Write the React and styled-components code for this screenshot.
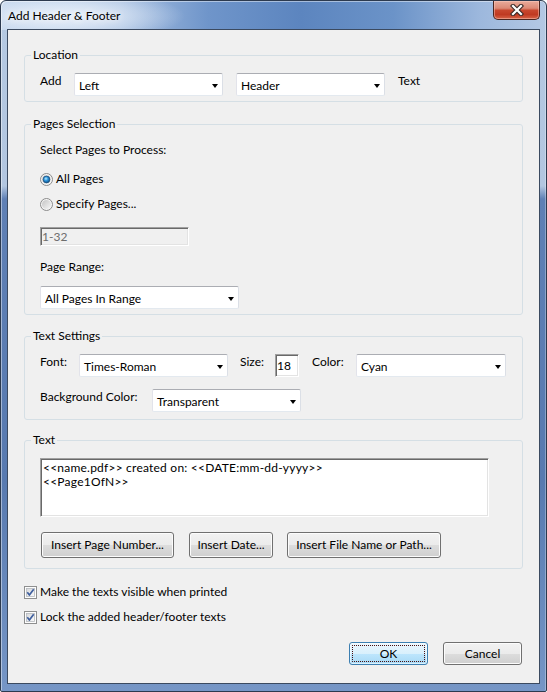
import React from 'react';
import styled, { createGlobalStyle, css } from 'styled-components';

const UI_FONT = `Lato, "Noto Sans", "DejaVu Sans", sans-serif`;

const GlobalStyle = createGlobalStyle`
  html, body { margin: 0; padding: 0; background: #fff; }
  body { font-family: ${UI_FONT}; font-size: 12px; color: #000; }
  *, *::before, *::after { box-sizing: border-box; }
`;

const Window = styled.div`
  width: 547px;
  height: 692px;
  display: flex;
  flex-direction: column;
  border: 1px solid #2c3a4f;
  border-radius: 6px 6px 2px 2px;
  padding: 0 6px 7px;
  overflow: hidden;
  background:
    radial-gradient(ellipse 120px 26px at 64px 15px, rgba(236, 243, 251, 0.95) 0%, rgba(236, 243, 251, 0.6) 45%, rgba(236, 243, 251, 0) 100%) top / 100% 29px no-repeat,
    linear-gradient(90deg, #bcd0ea 0%, #a6bfe1 22%, #6f95ca 38%, #5c85bf 55%, #6b93c8 72%, #9db8dd 88%, #b4c8e4 100%) top / 100% 29px no-repeat,
    linear-gradient(180deg, #b5c9e2 0px, #b2c6e0 185px, #5f80b5 198px, #587ab0 480px, #7696c6 100%);
  box-shadow: inset 1px 1px 0 rgba(255, 255, 255, 0.45), inset -1px 0 0 rgba(255, 255, 255, 0.3);
`;

const TitleBar = styled.div`
  height: 28px;
  flex: none;
  display: flex;
  justify-content: space-between;
  align-items: flex-start;
`;

const Title = styled.div`
  padding: 7px 0 0 1px;
  line-height: 16px;
  font-size: 12px;
  color: #000;
  text-shadow: 0 0 6px rgba(255, 255, 255, 0.9), 0 0 10px rgba(255, 255, 255, 0.7);
`;

const CloseButton = styled.div`
  width: 47px;
  height: 19px;
  display: flex;
  align-items: center;
  justify-content: center;
  border: 1px solid #4b2620;
  border-top: none;
  border-radius: 0 0 5px 5px;
  background: linear-gradient(180deg, #e9ab9b 0%, #dc8a76 40%, #c8472e 52%, #c03a22 75%, #d76448 100%);
  box-shadow: inset 0 0 0 1px rgba(255, 210, 200, 0.45);
`;

const Client = styled.div`
  flex: 1;
  display: flex;
  flex-direction: column;
  background: #f0f0f0;
  border: 1px solid #3b4a60;
  padding: 0 16px;
`;

const Group = styled.fieldset`
  margin: ${(p) => p.$mt}px 0 0;
  padding: 0;
  border: 1px solid #d5dfe5;
  border-radius: 3px;
  min-width: 0;
`;

const Legend = styled.legend`
  margin-left: 6px;
  padding: 0 2px;
  line-height: 16px;
  font-size: 12px;
`;

const GroupBody = styled.div`
  display: flex;
  flex-direction: column;
  align-items: flex-start;
  padding: ${(p) => p.$pt}px 15px ${(p) => p.$pb}px;
`;

const Row = styled.div`
  display: flex;
  align-items: ${(p) => p.$align || 'flex-start'};
  gap: ${(p) => p.$gap || 0}px;
  margin-top: ${(p) => p.$mt || 0}px;
  margin-left: ${(p) => p.$ml || 0}px;
`;

const Label = styled.div`
  line-height: 16px;
  white-space: nowrap;
  width: ${(p) => (p.$w ? `${p.$w}px` : 'auto')};
  margin-left: ${(p) => p.$ml || 0}px;
  margin-top: ${(p) => p.$mt || 0}px;
  flex: none;
`;

const Combo = styled.div`
  width: ${(p) => p.$w}px;
  height: 23px;
  flex: none;
  display: flex;
  align-items: center;
  justify-content: space-between;
  padding: 2px 4px 0 4px;
  margin-left: ${(p) => p.$ml || 0}px;
  margin-top: ${(p) => p.$mt || 0}px;
  background: #fff;
  border: 1px solid;
  border-color: #abadb3 #dbdfe6 #e3e9ef #e2e3ea;
  border-radius: 2px;
  line-height: 16px;
`;

const Arrow = styled.span`
  width: 0;
  height: 0;
  border-left: 3.5px solid transparent;
  border-right: 3.5px solid transparent;
  border-top: 4px solid #000;
  margin-top: 1px;
`;

const sunken = css`
  border: 1px solid;
  border-color: #a0a0a0 #ffffff #ffffff #a0a0a0;
  box-shadow: inset 1px 1px 0 #696969, inset -1px -1px 0 #e3e3e3;
`;

const SunkenInput = styled.input`
  ${sunken};
  width: ${(p) => p.$w}px;
  height: ${(p) => p.$h}px;
  margin: ${(p) => p.$mt || 0}px 0 0 ${(p) => p.$ml || 0}px;
  padding: 0 0 0 ${(p) => p.$pl || 1}px;
  font-family: ${UI_FONT};
  font-size: 12px;
  color: ${(p) => (p.$disabled ? '#6d6d6d' : '#000')};
  background: ${(p) => (p.$disabled ? '#f0f0f0' : '#fff')};
  outline: none;
  flex: none;
`;

const TextBox = styled.textarea`
  ${sunken};
  width: 449px;
  height: 59px;
  padding: 2px 2px;
  font-family: ${UI_FONT};
  font-size: 12px;
  line-height: 14px;
  letter-spacing: 0.22px;
  color: #000;
  background: #fff;
  resize: none;
  overflow: hidden;
  outline: none;
  display: block;
`;

const Button = styled.div`
  position: relative;
  width: ${(p) => p.$w}px;
  height: ${(p) => p.$h}px;
  margin-left: ${(p) => p.$ml || 0}px;
  display: flex;
  align-items: center;
  justify-content: center;
  line-height: 16px;
  white-space: nowrap;
  border: 1px solid ${(p) => (p.$primary ? '#3c7fb1' : '#707070')};
  border-radius: 3px;
  background: ${(p) =>
    p.$primary
      ? 'linear-gradient(180deg, #eaf6fd 0%, #d9f0fc 50%, #bee6fd 50%, #a7d9f5 100%)'
      : 'linear-gradient(180deg, #f2f2f2 0%, #ebebeb 50%, #dddddd 50%, #cfcfcf 100%)'};
  box-shadow: inset 0 0 0 1px ${(p) => (p.$primary ? 'rgba(255,255,255,0.6)' : '#fcfcfc')};
  flex: none;
  ${(p) =>
    p.$primary &&
    css`
      &::after {
        content: '';
        position: absolute;
        inset: 2px;
        border: 1px dotted #4a1010;
        border-radius: 1px;
      }
    `}
`;

const CheckRow = styled.div`
  display: flex;
  align-items: center;
  gap: 3px;
  line-height: 16px;
  margin-top: ${(p) => p.$mt}px;
`;

const Footer = styled.div`
  display: flex;
  justify-content: flex-end;
  gap: 15px;
  margin-top: 17px;
  padding-right: 1px;
`;

function Radio({ checked, id }) {
  return (
    <svg width="13" height="13" viewBox="0 0 13 13" style={{ flex: 'none' }}>
      <defs>
        <linearGradient id={`rg${id}`} x1="0" y1="0" x2="1" y2="1">
          <stop offset="0" stopColor="#c4c4c4" />
          <stop offset="1" stopColor="#f7f7f7" />
        </linearGradient>
        <radialGradient id={`rd${id}`} cx="0.42" cy="0.38" r="0.65">
          <stop offset="0" stopColor="#b9ecff" />
          <stop offset="0.45" stopColor="#2c94dc" />
          <stop offset="1" stopColor="#0d4c80" />
        </radialGradient>
      </defs>
      <circle cx="6.5" cy="6.5" r="6" fill="#f5f5f5" stroke="#8b8b8b" strokeWidth="1" />
      <circle cx="6.5" cy="6.5" r="4.6" fill={`url(#rg${id})`} />
      {checked && <circle cx="6.5" cy="6.5" r="3.4" fill={`url(#rd${id})`} stroke="#1a4b78" strokeWidth="0.7" />}
    </svg>
  );
}

function Checkbox({ id }) {
  return (
    <svg width="13" height="13" viewBox="0 0 13 13" style={{ flex: 'none' }}>
      <defs>
        <linearGradient id={`cg${id}`} x1="0" y1="0" x2="1" y2="1">
          <stop offset="0" stopColor="#d6d8db" />
          <stop offset="1" stopColor="#fbfbfb" />
        </linearGradient>
      </defs>
      <rect x="0.5" y="0.5" width="12" height="12" fill="#fdfdfd" stroke="#8e8f8f" />
      <rect x="2.5" y="2.5" width="8" height="8" fill={`url(#cg${id})`} stroke="#b5b9be" strokeWidth="0.8" />
      <path d="M3.3 6.3 L5.4 9 L9.7 3.2" fill="none" stroke="#3f5f9e" strokeWidth="1.7" strokeLinejoin="round" />
    </svg>
  );
}

function CloseX() {
  return (
    <svg width="14" height="12" viewBox="0 0 14 12">
      <path d="M3 2 L11 10 M11 2 L3 10" stroke="#3a2a28" strokeWidth="4.4" strokeLinecap="square" />
      <path d="M3 2 L11 10 M11 2 L3 10" stroke="#ffffff" strokeWidth="2.2" strokeLinecap="square" />
    </svg>
  );
}

export default function App() {
  return (
    <>
      <GlobalStyle />
      <Window>
        <TitleBar>
          <Title>Add Header &amp; Footer</Title>
          <CloseButton>
            <CloseX />
          </CloseButton>
        </TitleBar>
        <Client>
          <Group $mt={17}>
            <Legend>Location</Legend>
            <GroupBody $pt={10} $pb={5}>
              <Row>
                <Label $w={34}>Add</Label>
                <Combo $w={149}>
                  <span>Left</span>
                  <Arrow />
                </Combo>
                <Combo $w={149} $ml={13}>
                  <span>Header</span>
                  <Arrow />
                </Combo>
                <Label $ml={13}>Text</Label>
              </Row>
            </GroupBody>
          </Group>

          <Group $mt={14}>
            <Legend>Pages Selection</Legend>
            <GroupBody $pt={10} $pb={5}>
              <Label>Select Pages to Process:</Label>
              <CheckRow $mt={13}>
                <Radio checked id="a" />
                <span>All Pages</span>
              </CheckRow>
              <CheckRow $mt={9}>
                <Radio id="b" />
                <span>Specify Pages...</span>
              </CheckRow>
              <SunkenInput $w={149} $h={19} $mt={15} $pl={0} $disabled readOnly value="1-32" />
              <Label $mt={13}>Page Range:</Label>
              <Combo $w={199} $mt={11}>
                <span>All Pages In Range</span>
                <Arrow />
              </Combo>
            </GroupBody>
          </Group>

          <Group $mt={13}>
            <Legend>Text Settings</Legend>
            <GroupBody $pt={10} $pb={7}>
              <Row>
                <Label $w={39}>Font:</Label>
                <Combo $w={149}>
                  <span>Times-Roman</span>
                  <Arrow />
                </Combo>
                <Label $w={35} $ml={12}>Size:</Label>
                <SunkenInput $w={24} $h={23} $pl={1} readOnly value="18" />
                <Label $w={44} $ml={13}>Color:</Label>
                <Combo $w={150}>
                  <span>Cyan</span>
                  <Arrow />
                </Combo>
              </Row>
              <Row $mt={12}>
                <Label $w={112}>Background Color:</Label>
                <Combo $w={149}>
                  <span>Transparent</span>
                  <Arrow />
                </Combo>
              </Row>
            </GroupBody>
          </Group>

          <Group $mt={12}>
            <Legend>Text</Legend>
            <GroupBody $pt={10} $pb={10}>
              <TextBox
                readOnly
                spellCheck={false}
                value={'<<name.pdf>> created on: <<DATE:mm-dd-yyyy>>\n<<Page1OfN>>'}
              />
              <Row $mt={15} $ml={1} $gap={15}>
                <Button $w={133} $h={26}>Insert Page Number...</Button>
                <Button $w={84} $h={26}>Insert Date...</Button>
                <Button $w={154} $h={26} $ml={-1}>Insert File Name or Path...</Button>
              </Row>
            </GroupBody>
          </Group>

          <CheckRow $mt={15}>
            <Checkbox id="1" />
            <span>Make the texts visible when printed</span>
          </CheckRow>
          <CheckRow $mt={9}>
            <Checkbox id="2" />
            <span>Lock the added header/footer texts</span>
          </CheckRow>

          <Footer>
            <Button $w={79} $h={23} $primary>OK</Button>
            <Button $w={79} $h={23}>Cancel</Button>
          </Footer>
        </Client>
      </Window>
    </>
  );
}
